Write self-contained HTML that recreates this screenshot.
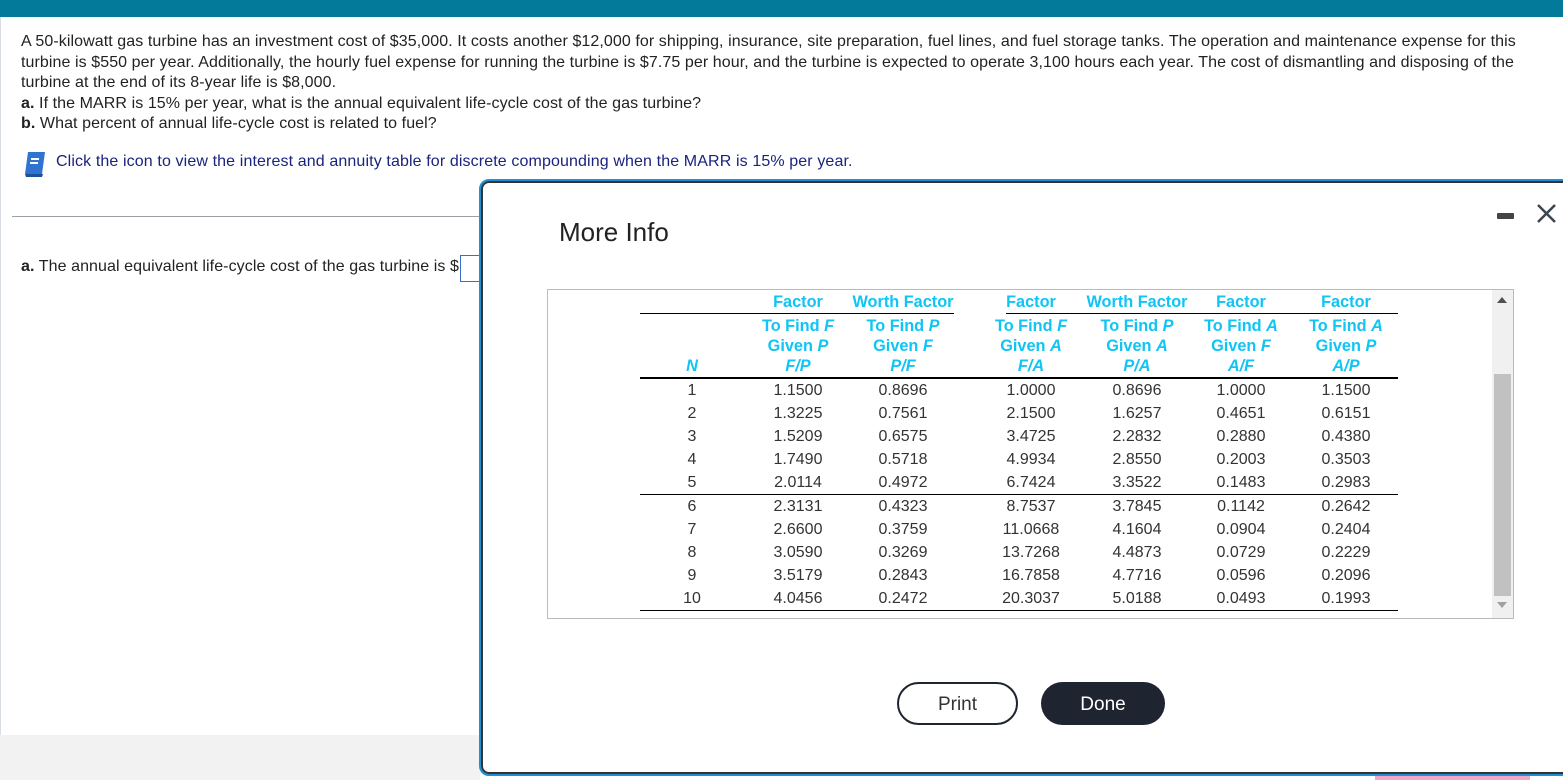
<!DOCTYPE html>
<html><head><meta charset="utf-8"><style>
*{margin:0;padding:0;box-sizing:border-box}
body{width:1563px;height:780px;overflow:hidden;background:#fff;font-family:"Liberation Sans",Arial,sans-serif;color:#222;position:relative}
.top{position:absolute;left:0;top:0;width:1563px;height:17px;background:#037a9a}
.lb{position:absolute;left:0;top:17px;width:1px;height:718px;background:#d8dde3}
.q{position:absolute;left:21px;top:32px;width:1530px;font-size:16px;line-height:20.5px;color:#222;letter-spacing:0.08px}
.link{position:absolute;left:56px;top:153px;font-size:16px;color:#1a237e;letter-spacing:0.12px}
.hr{position:absolute;left:12px;top:216px;width:470px;height:1px;background:#9aa0a6}
.ans{position:absolute;left:21px;top:258px;font-size:16px;letter-spacing:0.08px}
.inp{position:absolute;left:460px;top:255px;width:22px;height:27px;border:1px solid #3a6fc4;background:#fff}
.gray{position:absolute;left:0;top:735px;width:480px;height:45px;background:#f2f2f2}
.modal{position:absolute;left:479px;top:179px;width:1100px;height:597px;border:2px solid #1e90d6;border-radius:10px}
.modal .in{position:absolute;left:0;top:0;right:0;bottom:0;border:2px solid #333;border-radius:8px;background:#fff}
.title{position:absolute;left:559px;top:217px;font-size:26px;color:#222}
.min{position:absolute;left:1497px;top:213px;width:17px;height:6px;background:#444;border-radius:1px}
.box{position:absolute;left:547px;top:289px;width:967px;height:330px;border:1px solid #bbb}
.sb{position:absolute;left:1492px;top:290px;width:21px;height:328px;background:#f0f0f0}
.thumb{position:absolute;left:1494px;top:374px;width:17px;height:222px;background:#c1c1c1}
.h{position:absolute;color:#10c4f4;font-weight:bold;font-size:16.3px;text-align:center;width:130px;margin-left:-65px;line-height:20px}
.h i{font-style:italic}
.c{position:absolute;font-size:16px;color:#333;text-align:center;width:100px;margin-left:-50px}
.ln{position:absolute;height:1px;background:#000}
.btn{position:absolute;top:682px;height:43px;border-radius:22px;font-size:19px;text-align:center;line-height:41px}
</style></head><body>
<div class="top"></div><div class="lb"></div>
<div class="q">A 50-kilowatt gas turbine has an investment cost of $35,000. It costs another $12,000 for shipping, insurance, site preparation, fuel lines, and fuel storage tanks. The operation and maintenance expense for this turbine is $550 per year. Additionally, the hourly fuel expense for running the turbine is $7.75 per hour, and the turbine is expected to operate 3,100 hours each year. The cost of dismantling and disposing of the turbine at the end of its 8-year life is $8,000.<br><b>a.</b> If the MARR is 15% per year, what is the annual equivalent life-cycle cost of the gas turbine?<br><b>b.</b> What percent of annual life-cycle cost is related to fuel?</div>
<svg style="position:absolute;left:22px;top:150px" width="26" height="28" viewBox="0 0 26 28"><path d="M6 2h17l-3 22H3z" fill="#2f74d0"/><path d="M3 24l1 3h16l1-3" fill="#1c4f9c"/><rect x="9" y="8" width="8" height="2" fill="#fff"/><rect x="8" y="12" width="8" height="2" fill="#fff"/></svg>
<div class="link">Click the icon to view the interest and annuity table for discrete compounding when the MARR is 15% per year.</div>
<div class="hr"></div>
<div class="ans"><b>a.</b> The annual equivalent life-cycle cost of the gas turbine is $</div>
<div class="inp"></div>
<div class="gray"></div>
<div style="position:absolute;left:1200px;top:774px;width:80px;height:6px;background:#fff;border-top:1px solid #888"></div>
<div style="position:absolute;left:1375px;top:774px;width:155px;height:6px;background:#f4a6c8"></div>
<div class="modal"><div class="in"></div></div>
<div class="title">More Info</div>
<div class="min"></div>
<svg style="position:absolute;left:1536px;top:203px" width="21" height="21" viewBox="0 0 21 21"><path d="M2 2L19 19M19 2L2 19" stroke="#3b4650" stroke-width="2.5"/></svg>
<div class="box"></div>
<div class="sb"></div><div class="thumb"></div>
<svg style="position:absolute;left:1497px;top:297px" width="10" height="6"><path d="M0 6L5 0L10 6z" fill="#505050"/></svg>
<svg style="position:absolute;left:1497px;top:602px" width="10" height="6"><path d="M0 0L5 6L10 0z" fill="#a0a0a0"/></svg>
<div class="ln" style="left:640px;top:313px;width:314px"></div>
<div class="ln" style="left:1006px;top:313px;width:392px"></div>
<div class="ln" style="left:640px;top:377px;width:758px;height:2px"></div>
<div class="ln" style="left:640px;top:494px;width:758px"></div>
<div class="ln" style="left:640px;top:610px;width:758px"></div>
<div id="t"></div>
<div class="btn" style="left:897px;width:121px;border:2px solid #1e2430;color:#333">Print</div>
<div class="btn" style="left:1041px;width:124px;background:#1e2430;color:#fff;line-height:45px">Done</div>
<script>
var cx=[692,798,903,1031,1137,1241,1346];
var top1=["","Factor","Worth Factor","Factor","Worth Factor","Factor","Factor"];
var h2=[["",""],["To Find <i>F</i>","Given <i>P</i>"],["To Find <i>P</i>","Given <i>F</i>"],["To Find <i>F</i>","Given <i>A</i>"],["To Find <i>P</i>","Given <i>A</i>"],["To Find <i>A</i>","Given <i>F</i>"],["To Find <i>A</i>","Given <i>P</i>"]];
var h3=["N","F/P","P/F","F/A","P/A","A/F","A/P"];
var d=[[1,"1.1500","0.8696","1.0000","0.8696","1.0000","1.1500"],[2,"1.3225","0.7561","2.1500","1.6257","0.4651","0.6151"],[3,"1.5209","0.6575","3.4725","2.2832","0.2880","0.4380"],[4,"1.7490","0.5718","4.9934","2.8550","0.2003","0.3503"],[5,"2.0114","0.4972","6.7424","3.3522","0.1483","0.2983"],[6,"2.3131","0.4323","8.7537","3.7845","0.1142","0.2642"],[7,"2.6600","0.3759","11.0668","4.1604","0.0904","0.2404"],[8,"3.0590","0.3269","13.7268","4.4873","0.0729","0.2229"],[9,"3.5179","0.2843","16.7858","4.7716","0.0596","0.2096"],[10,"4.0456","0.2472","20.3037","5.0188","0.0493","0.1993"]];
var s="";
for(var i=0;i<7;i++){
 s+='<div class="h" style="left:'+cx[i]+'px;top:292px">'+top1[i]+'</div>';
 s+='<div class="h" style="left:'+cx[i]+'px;top:316px">'+h2[i][0]+'</div>';
 s+='<div class="h" style="left:'+cx[i]+'px;top:336px">'+h2[i][1]+'</div>';
 s+='<div class="h" style="left:'+cx[i]+'px;top:356px"><i>'+h3[i]+'</i></div>';
 for(var r=0;r<10;r++) s+='<div class="c" style="left:'+cx[i]+'px;top:'+(382+r*23.1)+'px">'+d[r][i]+'</div>';
}
document.getElementById('t').innerHTML=s;
</script>
</body></html>
